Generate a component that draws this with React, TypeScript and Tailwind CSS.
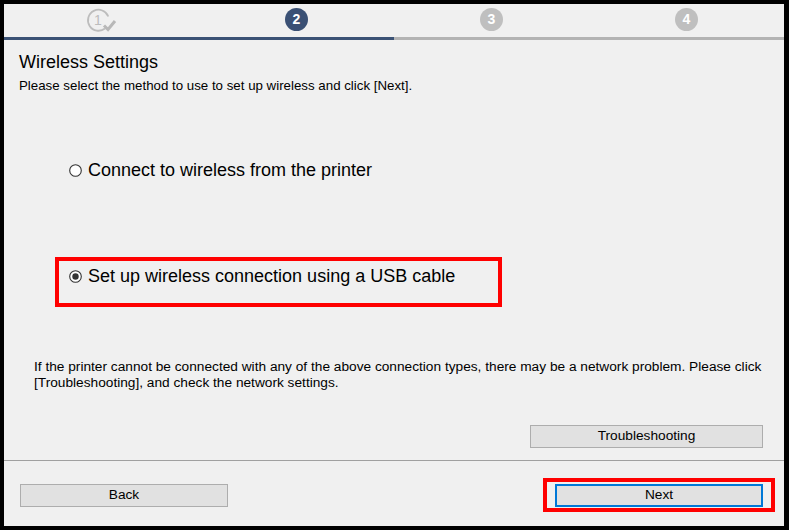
import React from 'react';

const font = { fontFamily: '"Liberation Sans", Arial, sans-serif' };

function Radio({ checked }: { checked?: boolean }) {
  return (
    <svg width="13" height="13" viewBox="0 0 13 13" className="shrink-0">
      <circle cx="6.5" cy="6.5" r="5.8" fill="#ffffff" stroke="#333333" strokeWidth="1.1" />
      {checked && <circle cx="6.5" cy="6.5" r="3.2" fill="#333333" />}
    </svg>
  );
}

function DoneStep() {
  return (
    <svg width="32" height="28" viewBox="0 0 32 28">
      <path d="M19 22.5 A10.5 10.5 0 1 1 22.3 10.5" fill="none" stroke="#bdbdbd" strokeWidth="1.8" />
      <text x="12" y="19" textAnchor="middle" fontSize="14" fontFamily="Liberation Sans, Arial, sans-serif" fill="#bdbdbd">1</text>
      <path d="M18 19.5 L22 23.5 L29 15" fill="none" stroke="#b8b8b8" strokeWidth="3" />
    </svg>
  );
}

function StepCircle({ n, active }: { n: number; active?: boolean }) {
  return (
    <div
      className={`w-[23px] h-[23px] rounded-full flex items-center justify-center text-white font-bold text-[14px] leading-none ${
        active ? 'bg-[#3a5074]' : 'bg-[#bfbfbf]'
      }`}
    >
      {n}
    </div>
  );
}

function Button({ label, className = '' }: { label: string; className?: string }) {
  return (
    <div
      className={`h-[23px] flex items-center justify-center bg-[#e1e1e1] border border-[#adadad] text-[13.7px] text-black ${className}`}
    >
      {label}
    </div>
  );
}

export default function App() {
  return (
    <div className="w-[789px] h-[530px] bg-black pt-[4px] pl-[4px] pr-[5px] pb-[4px]" style={font}>
      <div className="h-full bg-[#f0f0f0] flex flex-col">
        {/* step indicator */}
        <div className="h-[33px] grid grid-cols-4 items-center pb-[3px]">
          <div className="flex justify-center pt-[2px]">
            <DoneStep />
          </div>
          <div className="flex justify-center">
            <StepCircle n={2} active />
          </div>
          <div className="flex justify-center">
            <StepCircle n={3} />
          </div>
          <div className="flex justify-center">
            <StepCircle n={4} />
          </div>
        </div>
        <div className="h-[3px] flex">
          <div className="w-[390px] bg-[#3b5275]" />
          <div className="flex-1 bg-[#b3b3b3]" />
        </div>

        {/* content */}
        <div className="flex-1 flex flex-col pl-[15px]">
          <h1 className="mt-[12px] text-[18px] leading-[20px] text-black font-normal">Wireless Settings</h1>
          <p className="mt-[6px] text-[13.3px] leading-[15px] text-black">
            Please select the method to use to set up wireless and click [Next].
          </p>

          <div className="mt-[67px] ml-[50px] h-[20px] flex items-center gap-[6px]">
            <Radio />
            <span className="text-[18px] leading-[20px] text-black">Connect to wireless from the printer</span>
          </div>

          <div className="mt-[77px] ml-[36px] w-[447px] h-[50px] border-[4px] border-[#ff0000] pl-[10px] pt-[5px]">
            <div className="h-[20px] flex items-center gap-[6px]">
              <Radio checked />
              <span className="text-[18px] leading-[20px] text-black">Set up wireless connection using a USB cable</span>
            </div>
          </div>

          <p className="mt-[52px] ml-[15px] pr-[12px] text-[13.7px] leading-[16px] text-black">
            If the printer cannot be connected with any of the above connection types, there may be a network problem. Please click [Troubleshooting], and check the network settings.
          </p>

          <div className="mt-[34px] flex justify-end pr-[21px]">
            <Button label="Troubleshooting" className="w-[233px]" />
          </div>
        </div>

        <div className="h-px bg-[#a0a0a0]" />

        {/* footer */}
        <div className="h-[65px] flex justify-between items-start pl-[16px] pr-[9px]">
          <Button label="Back" className="mt-[23px] w-[208px]" />
          <div className="mt-[17px] w-[232px] h-[34px] border-[4px] border-[#ff0000] pl-[8px] pr-[8px] pt-[2px]">
            <div className="h-[23px] flex items-center justify-center bg-[#e1e1e1] border-[2px] border-[#0078d7] text-[13.7px] text-black">
              Next
            </div>
          </div>
        </div>
      </div>
    </div>
  );
}
